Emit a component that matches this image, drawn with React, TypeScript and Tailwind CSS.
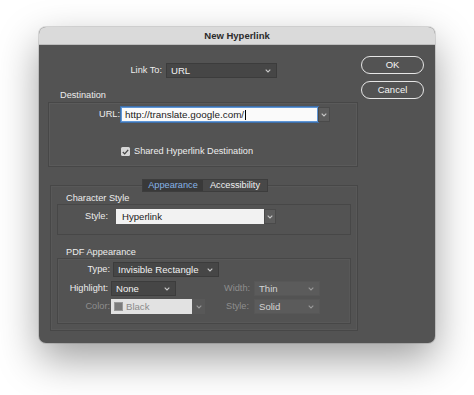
import React from "react";

const Chevron = ({ color = "#c8c8c8" }: { color?: string }) => (
  <svg width="6" height="4" viewBox="0 0 6 4" className="shrink-0">
    <polyline points="0.7,0.7 3,3 5.3,0.7" fill="none" stroke={color} strokeWidth="1.1" />
  </svg>
);

const DarkSelect = ({ value, w, disabled }: { value: string; w: string; disabled?: boolean }) => (
  <div
    className={`${w} h-[15px] flex items-center justify-between pl-[4px] pr-[5px] border text-[9.6px] ${
      disabled ? "bg-[#5b5b5b] border-[#575757] text-[#d4d4d4]" : "bg-[#464646] border-[#3c3c3c] text-[#f2f2f2]"
    }`}
  >
    <span>{value}</span>
    <Chevron color={disabled ? "#9a9a9a" : "#c8c8c8"} />
  </div>
);

export default function App() {
  return (
    <div
      className="w-[474px] h-[395px] bg-white pl-[39px] pt-[27px] text-[9.2px] leading-none"
      style={{ fontFamily: '"Liberation Sans", Arial, sans-serif' }}
    >
      <div className="w-[396px] h-[316px] rounded-[7px] bg-[#535353] overflow-hidden flex flex-col shadow-[0_16px_40px_rgba(0,0,0,0.38),0_0_0_1px_rgba(0,0,0,0.12)]">
        {/* title bar */}
        <div className="h-[18px] bg-[#dadada] flex items-center justify-center text-[9.5px] font-bold text-[#2b2b2b] border-b border-[#bdbdbd]">
          New Hyperlink
        </div>
        {/* body */}
        <div className="flex pl-[9px] pr-[11px] pt-[11px] gap-[3px] text-[#ededed]">
          {/* left column */}
          <div className="w-[310px] flex flex-col">
            {/* Link To */}
            <div className="mt-[7px] flex items-center h-[15px]">
              <div className="w-[114px] text-right">Link To:</div>
              <div className="ml-[4px]">
                <DarkSelect value="URL" w="w-[111px]" />
              </div>
            </div>
            {/* Destination */}
            <div className="mt-[12px] pl-[12px] h-[11px] flex items-center">Destination</div>
            <div className="mt-[1px] h-[65px] border border-[#474747] shadow-[inset_0_0_0_1px_#5a5a5a]">
              <div className="mt-[4px] flex items-center h-[15px]">
                <div className="w-[71px] text-right">URL:</div>
                <div className="ml-[1px] w-[197px] h-[15px] bg-[#fafafa] border border-[#5f96d6] shadow-[0_0_0_1px_#3f6fa8] flex items-center pl-[3px] text-[#1a1a1a] text-[9.9px]">
                  http://translate.google.com/
                  <span className="inline-block w-px h-[10px] bg-black ml-px" />
                </div>
                <div className="w-[12px] h-[15px] bg-[#5c5c5c] border border-[#4a4a4a] flex items-center justify-center">
                  <Chevron />
                </div>
              </div>
              <div className="mt-[25px] flex items-center pl-[72px]">
                <div className="w-[9px] h-[9px] rounded-[1.5px] bg-[#d6d6d6] flex items-center justify-center">
                  <svg width="7" height="6" viewBox="0 0 7 6">
                    <polyline points="0.8,3 2.7,4.9 6.2,0.8" fill="none" stroke="#444" strokeWidth="1.3" />
                  </svg>
                </div>
                <span className="ml-[4px]">Shared Hyperlink Destination</span>
              </div>
            </div>
            {/* tabs */}
            <div className="mt-[12px] pl-[94px] relative z-10 flex">
              <div className="flex h-[13px] border border-[#3d3d3d] bg-[#484848]">
                <div className="w-[60px] bg-[#393939] text-[#86b4e8] flex items-center justify-center">Appearance</div>
                <div className="w-[64px] text-[#f2f2f2] flex items-center justify-center">Accessibility</div>
              </div>
            </div>
            {/* appearance panel */}
            <div className="-mt-[7px] ml-[2px] w-[308px] h-[146px] border border-[#474747] shadow-[inset_0_0_0_1px_#585858] px-[6px] flex flex-col">
              <div className="mt-[8px] pl-[9px] h-[10px] flex items-center">Character Style</div>
              <div className="h-[31px] border border-[#474747]">
                <div className="mt-[4px] flex items-center h-[15px]">
                  <div className="w-[50px] text-right">Style:</div>
                  <div className="ml-[8px] w-[148px] h-[15px] bg-[#f2f2f2] text-[#1a1a1a] flex items-center pl-[6px] text-[9.6px]">
                    Hyperlink
                  </div>
                  <div className="w-[12px] h-[15px] bg-[#5c5c5c] border border-[#4a4a4a] flex items-center justify-center">
                    <Chevron />
                  </div>
                </div>
              </div>
              <div className="mt-[13px] pl-[9px] h-[10px] flex items-center">PDF Appearance</div>
              <div className="h-[66px] border border-[#474747] shadow-[inset_0_0_0_1px_#585858]">
                <div className="mt-[3px] flex items-center h-[15px]">
                  <div className="w-[52px] text-right">Type:</div>
                  <div className="ml-[3px]">
                    <DarkSelect value="Invisible Rectangle" w="w-[106px]" />
                  </div>
                </div>
                <div className="mt-[4px] flex items-center h-[15px]">
                  <div className="w-[50px] text-right">Highlight:</div>
                  <div className="ml-[3px]">
                    <DarkSelect value="None" w="w-[65px]" />
                  </div>
                  <div className="ml-[48px] w-[25px] text-right text-[#8e8e8e]">Width:</div>
                  <div className="ml-[5px]">
                    <DarkSelect value="Thin" w="w-[66px]" disabled />
                  </div>
                </div>
                <div className="mt-[3px] flex items-center h-[15px]">
                  <div className="w-[52px] text-right text-[#8e8e8e]">Color:</div>
                  <div className="ml-[1px] w-[81px] h-[15px] bg-[#e2e2e2] flex items-center pl-[3px] text-[#8a8a8a] text-[9.6px]">
                    <span className="w-[9px] h-[9px] bg-[#7b7b7b] border border-[#999] mr-[3px]" />
                    Black
                  </div>
                  <div className="w-[13px] h-[15px] bg-[#585858] flex items-center justify-center">
                    <Chevron color="#9a9a9a" />
                  </div>
                  <div className="w-[44px] text-right text-[#8e8e8e]">Style:</div>
                  <div className="ml-[5px]">
                    <DarkSelect value="Solid" w="w-[66px]" disabled />
                  </div>
                </div>
              </div>
            </div>
          </div>
          {/* right column */}
          <div className="w-[63px] flex flex-col">
            <div className="h-[18px] rounded-full border-[1.5px] border-[#e6e6e6] flex items-center justify-center text-[9.5px] text-[#f5f5f5]">
              OK
            </div>
            <div className="mt-[7px] h-[18px] rounded-full border-[1.5px] border-[#e6e6e6] flex items-center justify-center text-[9.5px] text-[#f5f5f5]">
              Cancel
            </div>
          </div>
        </div>
      </div>
    </div>
  );
}
